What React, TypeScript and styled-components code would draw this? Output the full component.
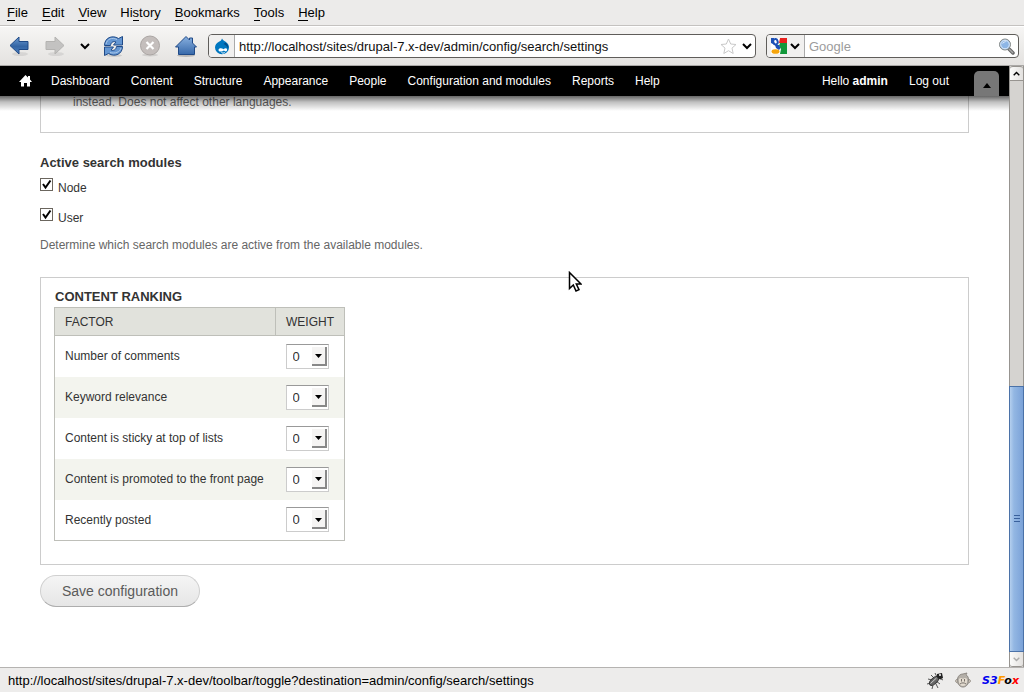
import React from "react";
import styled, { createGlobalStyle } from "styled-components";

const GlobalStyle = createGlobalStyle`
  *, *::before, *::after { box-sizing: border-box; }
  body { margin: 0; background: #fff; }
  body, button, input, select { font-family: "Liberation Sans", Arial, sans-serif; }
`;

const Browser = styled.div`
  display: flex;
  flex-direction: column;
  min-height: 100vh;
  font-size: 13px;
  color: #000;
`;

const MenuBar = styled.nav`
  display: flex;
  align-items: center;
  gap: 14px;
  height: 26px;
  padding: 0 7px;
  background: #ecebea;
  border-bottom: 1px solid #c4c2c0;
`;

const MenuButton = styled.button`
  padding: 0;
  border: 0;
  background: none;
  font-size: 13px;
  line-height: 18px;
  color: #000;
`;

const Accel = styled.span`
  border-bottom: 1px solid #000;
`;

const NavBar = styled.div`
  display: flex;
  align-items: center;
  height: 40px;
  padding: 0 5px 0 7px;
  background: linear-gradient(#f6f5f4, #e4e2e0);
  border-top: 1px solid #fff;
  border-bottom: 1px solid #aaa8a6;
`;

const NavButtons = styled.div`
  display: flex;
  align-items: center;
  gap: 12px;
  margin-right: 10px;
`;

const IconButton = styled.button<{ $narrow?: boolean }>`
  display: flex;
  align-items: center;
  justify-content: center;
  flex: none;
  width: ${(p) => (p.$narrow ? "11px" : "24px")};
  height: 24px;
  padding: 0;
  border: 0;
  background: none;
  & > svg { flex: none; }
`;

const Field = styled.div<{ $search?: boolean }>`
  display: flex;
  align-items: center;
  flex: ${(p) => (p.$search ? "0 0 253px" : "1 1 0")};
  min-width: 0;
  height: 24px;
  margin-left: ${(p) => (p.$search ? "10px" : "0")};
  overflow: hidden;
  background: #fff;
  border: 1px solid #5f5d5a;
  border-radius: 4px;
`;

const FieldBadge = styled.div<{ $wide?: boolean }>`
  display: flex;
  align-items: center;
  justify-content: center;
  gap: 3px;
  flex: none;
  width: ${(p) => (p.$wide ? "38px" : "26px")};
  height: 22px;
  background: #f1f0ef;
  border-right: 1px solid #aaa;
  & > svg { flex: none; }
`;

const FieldInput = styled.input`
  flex: 1;
  min-width: 0;
  padding: 0 0 0 4px;
  border: 0;
  outline: 0;
  background: transparent;
  font-size: 13px;
  color: #111;
  &::placeholder { color: #9c9c9c; opacity: 1; }
`;

const FieldTools = styled.div`
  display: flex;
  align-items: center;
  gap: 7px;
  padding-right: 3px;
`;

const Viewport = styled.div`
  display: flex;
  flex: 1;
`;

const Page = styled.div`
  flex: 1;
  min-width: 0;
  background: #fff;
  color: #333;
  font-size: 12px;
`;

const AdminBar = styled.nav`
  position: relative;
  display: flex;
  justify-content: space-between;
  height: 30px;
  padding: 0 10px 0 18px;
  background: #000;
  &::after {
    content: "";
    position: absolute;
    top: 30px;
    left: 0;
    right: 0;
    height: 15px;
    pointer-events: none;
    background: linear-gradient(rgba(0, 0, 0, 0.6), rgba(0, 0, 0, 0.25) 40%, rgba(0, 0, 0, 0));
  }
`;

const AdminLinks = styled.div`
  display: flex;
  align-items: center;
  gap: 1px;
`;

const AdminLink = styled.a`
  display: flex;
  align-items: center;
  padding: 0 10px;
  height: 30px;
  font-size: 12px;
  color: #fff;
  text-decoration: none;
  white-space: pre;
`;

const HomeLink = styled(AdminLink)`
  justify-content: center;
  width: 22px;
  padding: 0 8px 0 0;
  & > svg { flex: none; }
`;

const DrawerToggle = styled.button`
  display: flex;
  align-items: center;
  justify-content: center;
  align-self: flex-end;
  width: 25px;
  height: 25px;
  margin-left: 14px;
  padding: 4px 0 0;
  border: 0;
  border-radius: 5px 5px 0 0;
  background: #777;
`;

const Content = styled.main`
  padding: 0 40px 60px;
`;

const ClippedPanel = styled.section`
  height: 37px;
  padding: 0 32px;
  border: 1px solid #ccc;
  border-top: 0;
`;

const Description = styled.p`
  margin: 0;
  font-size: 12px;
  line-height: 13px;
  color: #666;
`;

const Modules = styled.fieldset`
  min-width: 0;
  margin: 22px 0 25px;
  padding: 0;
  border: 0;
`;

const ModulesTitle = styled.legend`
  padding: 0 0 2px;
  font-size: 13px;
  font-weight: bold;
  line-height: 16px;
`;

const CheckList = styled.div`
  padding-bottom: 6px;
`;

const CheckRow = styled.label`
  display: flex;
  align-items: center;
  gap: 5px;
  height: 30px;
  font-size: 12px;
`;

const CheckBoxFrame = styled.span`
  display: grid;
  width: 13px;
  height: 13px;
  margin-bottom: 8px;
  & > * { grid-area: 1 / 1; }
  & > svg { pointer-events: none; }
`;

const CheckBox = styled.input`
  appearance: none;
  width: 13px;
  height: 13px;
  margin: 0;
  background: #fff;
  border: 1px solid #6b665e;
`;

const RankingPanel = styled.section`
  padding: 11px 13px 23px;
  border: 1px solid #ccc;
`;

const RankingTitle = styled.h2`
  margin: 0;
  padding: 0 1px 2px;
  font-size: 13px;
  line-height: 16px;
  font-weight: bold;
  text-transform: uppercase;
`;

const RankingTable = styled.table`
  border-collapse: collapse;
  border: 1px solid #bebfb9;
  font-size: 12px;
`;

const HeadCell = styled.th<{ $factor?: boolean }>`
  width: ${(p) => (p.$factor ? "221px" : "auto")};
  height: 28px;
  padding: 0 10px;
  background: #e1e2dc;
  border: 1px solid #bebfb9;
  font-weight: normal;
  text-align: left;
  text-transform: uppercase;
`;

const Row = styled.tr`
  height: 41px;
  &:nth-child(even) { background: #f3f4ee; }
`;

const Cell = styled.td`
  padding: 0 10px;
  white-space: nowrap;
`;

const SelectFrame = styled.span`
  position: relative;
  display: block;
  width: 43px;
  height: 25px;
`;

const WeightSelect = styled.select`
  appearance: none;
  display: block;
  width: 100%;
  height: 100%;
  padding: 0 18px 0 6px;
  border: 1px solid #ccc;
  border-top-color: #999;
  border-radius: 0;
  background: #fff;
  font-size: 13px;
  color: #333;
`;

const SelectArrow = styled.span`
  position: absolute;
  top: 3px;
  right: 2px;
  display: flex;
  align-items: center;
  justify-content: center;
  width: 15px;
  height: 19px;
  padding-top: 2px;
  background: #f5f4f3;
  border: solid #888;
  border-width: 0 2px 2px 0;
  pointer-events: none;
`;

const SaveButton = styled.button`
  display: block;
  height: 32px;
  margin-top: 10px;
  padding: 0 21px;
  border: 1px solid #d0d0d0;
  border-bottom-color: #adadad;
  border-radius: 16px;
  background: linear-gradient(#f5f5f5, #e6e6e6);
  font-size: 14px;
  color: #5a5a5a;
`;

const ScrollBar = styled.div`
  display: flex;
  flex-direction: column;
  flex: none;
  width: 15px;
  background: #d5d3d0;
  border-left: 1px solid #979490;
  border-right: 1px solid #979490;
`;

const ScrollButton = styled.button<{ $dim?: boolean }>`
  display: flex;
  align-items: center;
  justify-content: center;
  flex: none;
  height: 15px;
  padding: 0;
  color: ${(p) => (p.$dim ? "#aaa" : "#000")};
  border: solid #979490;
  border-width: ${(p) => (p.$dim ? "0 0 1px" : "1px 0")};
  border-radius: ${(p) => (p.$dim ? "0 0 3px 3px" : "3px 3px 0 0")};
  background: linear-gradient(90deg, #fbfbfa, #e3e1df);
`;

const ScrollSpace = styled.div`
  flex: 306;
`;

const ScrollThumb = styled.div`
  display: flex;
  align-items: center;
  justify-content: center;
  flex: 265;
  margin: 0 -1px;
  border: 1px solid #4b72a8;
  background: linear-gradient(90deg, #b4cfee, #93b7e3 30%, #7ba2d8);
`;

const StatusBar = styled.footer`
  display: flex;
  align-items: center;
  justify-content: space-between;
  height: 25px;
  padding: 0 5px 0 8px;
  background: #edeceb;
  border-top: 1px solid #b5b3b1;
`;

const StatusIcons = styled.div`
  display: flex;
  align-items: center;
  gap: 11px;
`;

const FoxBadge = styled.span<{ $part?: string }>`
  font-family: "DejaVu Sans", sans-serif;
  font-size: 11px;
  font-weight: bold;
  font-style: italic;
  color: ${(p) => p.$part || "#0000f0"};
`;

const Pointer = styled.svg`
  position: absolute;
  left: 568px;
  top: 271px;
  pointer-events: none;
`;

const menus: [string, string, string][] = [
  ["", "F", "ile"],
  ["", "E", "dit"],
  ["", "V", "iew"],
  ["Hi", "s", "tory"],
  ["", "B", "ookmarks"],
  ["", "T", "ools"],
  ["", "H", "elp"],
];

const adminLinks = ["Dashboard", "Content", "Structure", "Appearance", "People", "Configuration and modules", "Reports", "Help"];

const factors = [
  "Number of comments",
  "Keyword relevance",
  "Content is sticky at top of lists",
  "Content is promoted to the front page",
  "Recently posted",
];

const Chevron = ({ up, small }: { up?: boolean; small?: boolean }) => (
  <svg width={small ? 7 : 10} height={small ? 5 : 7} viewBox="0 0 10 7" fill="none" stroke="currentColor" strokeWidth="2">
    <path d={up ? "M1 6l4-4 4 4" : "M1 1l4 4 4-4"} />
  </svg>
);

const ArrowIcon = ({ forward }: { forward?: boolean }) => (
  <svg width="22" height="22" viewBox="0 0 22 22">
    <defs>
      <linearGradient id="arrowBlue" x1="0" y1="0" x2="0" y2="1">
        <stop offset="0" stopColor="#6c9bd2" />
        <stop offset=".55" stopColor="#3465a4" />
        <stop offset="1" stopColor="#4b80c0" />
      </linearGradient>
    </defs>
    <ellipse cx="12" cy="19" rx="8" ry="2" fill="#000" opacity=".08" />
    <path
      transform={forward ? "matrix(-1 0 0 1 22 0)" : undefined}
      d="M2 10.500L11 2v4.500h9v8h-9v4.500z"
      fill={forward ? "#c3c2c1" : "url(#arrowBlue)"}
      stroke={forward ? "#b4b3b1" : "#204a87"}
      strokeLinejoin="round"
    />
  </svg>
);

const reloadHalf = "M1.500 10.500C1.500 3 9 -.5 15.500 3.500L19.500 1.500V10H10.500l2.500-3C10.500 6 8 7 7.500 10.500z";

const ReloadIcon = () => (
  <svg width="22" height="22" viewBox="0 0 22 22">
    <ellipse cx="11" cy="20.500" rx="8" ry="1.500" fill="#000" opacity=".12" />
    <g fill="#6496d2" stroke="#204a87" strokeLinejoin="round">
      <path d={reloadHalf} />
      <path transform="rotate(180 10.500 11)" d={reloadHalf} />
    </g>
    <path d="M3 9C4 4 9 2 14 4.500M18 13c-1 4-6 6-11 4.500" stroke="#a9c6e8" fill="none" />
  </svg>
);

const StopIcon = () => (
  <svg width="22" height="22" viewBox="0 0 22 22">
    <ellipse cx="11" cy="20" rx="8" ry="1.500" fill="#000" opacity=".1" />
    <circle cx="11" cy="10.500" r="9.500" fill="#c4bebc" stroke="#aaa5a3" />
    <path d="M7.500 7l7 7m0-7l-7 7" stroke="#fff" strokeWidth="2.200" />
  </svg>
);

const HomeIcon = () => (
  <svg width="22" height="22" viewBox="0 0 22 22">
    <defs>
      <linearGradient id="house" x1="0" y1="0" x2="0" y2="1">
        <stop offset="0" stopColor="#88b0df" />
        <stop offset="1" stopColor="#3869aa" />
      </linearGradient>
    </defs>
    <ellipse cx="11" cy="20.500" rx="9" ry="1.500" fill="#000" opacity=".2" />
    <path d="M11 1.500L14.500 5V3h3v5l4 4h-2v7.500h-16V12H.5z" fill="url(#house)" stroke="#204a87" strokeLinejoin="round" />
  </svg>
);

const DrupalIcon = () => (
  <svg width="16" height="17" viewBox="0 0 16 17">
    <path d="M8 .5c.8 2 3 2.500 4.500 4C14.500 6 15 8 15 9.500a7 6.800 0 0 1-14 0C1 7 2.500 5 4.500 4 6.500 3 7.300 2.500 8 .5z" fill="#0077c0" />
    <path d="M11.500 4.500c2.500 1.500 3.300 4 2.500 6.500-.5-2.500-2.500-4-4.500-5z" fill="#004f8c" />
    <path d="M4.500 12c0-2 3.200-2.300 5-.8 1.700-1.400 3.600-1.200 3.600.6 0 1.900-1.900 2-3.300.8-1.600 1.400-5.300 1.500-5.300-.6z" fill="#fff" />
    <path d="M7.500 14.500c1 .8 2.300.7 3.200 0" stroke="#fff" fill="none" />
  </svg>
);

const GoogleIcon = () => (
  <svg width="16" height="16" viewBox="0 0 16 16">
    <path fill="#fff" d="M0 0h16v16H0z" />
    <path fill="#e8211d" d="M9 0h7v5H8z" />
    <path fill="#12983a" d="M9 5h7v11H9l1-5-2-3z" />
    <path fill="#1d50b5" d="M0 0h3v6H2L0 5z" />
    <ellipse cx="4.500" cy="3.800" rx="2.200" ry="2.800" fill="#fff" stroke="#1d50b5" strokeWidth="2" transform="rotate(-15 4.500 3.800)" />
    <path d="M4 7h4l1.500 3-1.500 2-3-2z" fill="#1d50b5" />
    <ellipse cx="4.500" cy="13.500" rx="4" ry="2.300" fill="#f5a40b" />
  </svg>
);

const StarIcon = () => (
  <svg width="17" height="17" viewBox="0 0 17 17">
    <path d="M8.500 1l2.200 5 5.300.5-4 3.600 1.200 5.400-4.700-2.800-4.700 2.800L5 10.100 1 6.500 6.300 6z" fill="#fff" stroke="#c8c8c8" strokeLinejoin="round" />
  </svg>
);

const SearchIcon = () => (
  <svg width="17" height="17" viewBox="0 0 17 17">
    <path d="M10 10l5 5" stroke="#666" strokeWidth="3.500" strokeLinecap="round" />
    <path d="M11 11l4 4" stroke="#aaa" strokeWidth="1.500" />
    <circle cx="7" cy="6.500" r="5.500" fill="#8db6e6" stroke="#888a85" />
    <circle cx="7" cy="6.500" r="4.300" fill="none" stroke="#dfeaf7" />
    <path d="M4 6c1-3 3-3 5-2.500C7 4 6 5 4 6z" fill="#d5e5f7" />
  </svg>
);

const BugIcon = () => (
  <svg width="17" height="17" viewBox="0 0 17 17">
    <g stroke="#555" fill="none">
      <path d="M5 8L1 7m3 4l-4 1m6 1l-1 4m4-5l2 4M9 9l4 3M7 6L4 3m6 2L8 1m4 5l4 2" />
    </g>
    <ellipse cx="7" cy="9" rx="5.500" ry="2.800" transform="rotate(-42 7 9)" fill="#666" stroke="#333" />
    <path d="M3.500 11.500l6-5.500" stroke="#ccc" />
    <path d="M10 2l5-1 1 5-3 1.500-3-2.500z" fill="#222" />
    <circle cx="13" cy="3" r="1" fill="#fff" />
  </svg>
);

const MonkeyIcon = () => (
  <svg width="16" height="16" viewBox="0 0 16 16">
    <ellipse cx="8" cy="9" rx="7.500" ry="3" fill="#d3cbc0" stroke="#9c968e" />
    <path d="M2.500 7C3 3.500 5.500 2 8 2l4-1-1 1.800C13 4 13.500 6 13.500 8c0 4-2 7-5.500 7S2.500 12 2.500 7z" fill="#b4afa8" stroke="#8f8a84" />
    <path d="M4 7c1.500-1.500 3-1 4 0 1-1 2.500-1.500 4 0 .5 4-1 7-4 7s-4.500-3-4-7z" fill="#e3dbcf" />
    <path d="M5 12c1.500-1.500 4.500-1.500 6 0M6.500 7v2.500m3-2.500v2.500" stroke="#77716b" fill="none" />
  </svg>
);

export default function App() {
  return (
    <Browser>
      <GlobalStyle />
      <MenuBar aria-label="Browser menu">
        {menus.map(([before, key, after]) => (
          <MenuButton key={before + key + after} type="button">
            {before}<Accel>{key}</Accel>{after}
          </MenuButton>
        ))}
      </MenuBar>

      <NavBar>
        <NavButtons>
          <IconButton type="button" aria-label="Back"><ArrowIcon /></IconButton>
          <IconButton type="button" aria-label="Forward"><ArrowIcon forward /></IconButton>
          <IconButton type="button" aria-label="Recent pages" $narrow><Chevron /></IconButton>
          <IconButton type="button" aria-label="Reload"><ReloadIcon /></IconButton>
          <IconButton type="button" aria-label="Stop"><StopIcon /></IconButton>
          <IconButton type="button" aria-label="Home"><HomeIcon /></IconButton>
        </NavButtons>
        <Field>
          <FieldBadge><DrupalIcon /></FieldBadge>
          <FieldInput aria-label="Address" defaultValue="http://localhost/sites/drupal-7.x-dev/admin/config/search/settings" />
          <FieldTools>
            <IconButton type="button" aria-label="Bookmark this page" $narrow><StarIcon /></IconButton>
            <IconButton type="button" aria-label="Show history" $narrow><Chevron /></IconButton>
          </FieldTools>
        </Field>
        <Field $search>
          <FieldBadge $wide><GoogleIcon /><Chevron /></FieldBadge>
          <FieldInput aria-label="Search the web" placeholder="Google" />
          <IconButton type="button" aria-label="Search"><SearchIcon /></IconButton>
        </Field>
      </NavBar>

      <Viewport>
        <Page>
          <AdminBar aria-label="Administration">
            <AdminLinks>
              <HomeLink href="#home" aria-label="Home">
                <svg width="13" height="12" viewBox="0 0 13 12">
                  <path d="M6.500 0L9 2.500V1h2v3.500L13 7h-2v4.500H8V8H5v3.500H2V7H0z" fill="#fff" />
                </svg>
              </HomeLink>
              {adminLinks.map((label) => (
                <AdminLink key={label} href={"#" + label.toLowerCase().replace(/ /g, "-")}>{label}</AdminLink>
              ))}
            </AdminLinks>
            <AdminLinks>
              <AdminLink href="#account">Hello <strong>admin</strong></AdminLink>
              <AdminLink href="#logout">Log out</AdminLink>
              <DrawerToggle type="button" aria-label="Open the drawer">
                <svg width="8" height="5" viewBox="0 0 8 5"><path d="M4 0l4 5H0z" /></svg>
              </DrawerToggle>
            </AdminLinks>
          </AdminBar>

          <Content>
            <ClippedPanel>
              <Description>instead. Does not affect other languages.</Description>
            </ClippedPanel>

            <Modules>
              <ModulesTitle>Active search modules</ModulesTitle>
              <CheckList>
                {["Node", "User"].map((name) => (
                  <CheckRow key={name}>
                    <CheckBoxFrame>
                      <CheckBox type="checkbox" defaultChecked />
                      <svg width="13" height="13" viewBox="0 0 13 13" fill="none" stroke="#000" strokeWidth="2">
                        <path d="M3 6l2.500 3.500L10.500 2.500" />
                      </svg>
                    </CheckBoxFrame>
                    {name}
                  </CheckRow>
                ))}
              </CheckList>
              <Description>Determine which search modules are active from the available modules.</Description>
            </Modules>

            <RankingPanel>
              <RankingTitle>Content ranking</RankingTitle>
              <RankingTable>
                <thead>
                  <tr>
                    <HeadCell scope="col" $factor>Factor</HeadCell>
                    <HeadCell scope="col">Weight</HeadCell>
                  </tr>
                </thead>
                <tbody>
                  {factors.map((factor) => (
                    <Row key={factor}>
                      <Cell>{factor}</Cell>
                      <Cell>
                        <SelectFrame>
                          <WeightSelect aria-label={factor} defaultValue="0">
                            {Array.from({ length: 11 }, (_, n) => <option key={n}>{n}</option>)}
                          </WeightSelect>
                          <SelectArrow>
                            <svg width="7" height="4" viewBox="0 0 7 4"><path d="M0 0h7L3.500 4z" /></svg>
                          </SelectArrow>
                        </SelectFrame>
                      </Cell>
                    </Row>
                  ))}
                </tbody>
              </RankingTable>
            </RankingPanel>
            <SaveButton type="button">Save configuration</SaveButton>
          </Content>
        </Page>

        <ScrollBar>
          <ScrollButton type="button" aria-label="Scroll up"><Chevron up small /></ScrollButton>
          <ScrollSpace />
          <ScrollThumb>
            <svg width="6" height="8" viewBox="0 0 6 8"><path d="M0 .5h6M0 3.500h6M0 6.500h6" stroke="#3a619c" /></svg>
          </ScrollThumb>
          <ScrollButton type="button" aria-label="Scroll down" $dim><Chevron small /></ScrollButton>
        </ScrollBar>
      </Viewport>

      <StatusBar>
        <span>http://localhost/sites/drupal-7.x-dev/toolbar/toggle?destination=admin/config/search/settings</span>
        <StatusIcons>
          <BugIcon />
          <MonkeyIcon />
          <FoxBadge>S3<FoxBadge $part="#ff9a00">F</FoxBadge><FoxBadge $part="#000">o</FoxBadge><FoxBadge $part="#f00">x</FoxBadge></FoxBadge>
        </StatusIcons>
      </StatusBar>

      <Pointer width="14" height="22" viewBox="0 0 14 22" aria-hidden="true">
        <path d="M1.500 1.500v16l3.800-3.500 2.700 6 3-1.300-2.700-5.700H13z" fill="#fff" stroke="#000" strokeWidth="1.500" />
      </Pointer>
    </Browser>
  );
}
